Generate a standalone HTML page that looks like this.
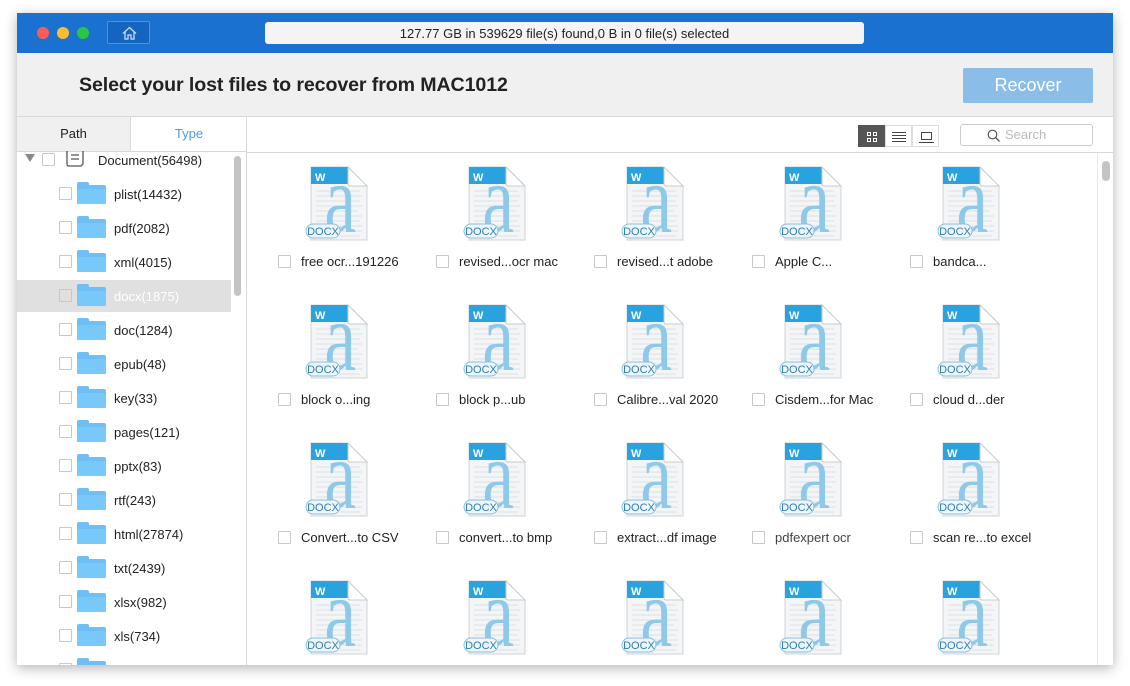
<!DOCTYPE html>
<html><head><meta charset="utf-8"><style>
*{box-sizing:border-box;margin:0;padding:0}
body{width:1130px;height:686px;background:#fff;font-family:"Liberation Sans",sans-serif;position:relative;overflow:hidden}
.win{position:absolute;left:17px;top:13px;width:1096px;height:652px;background:#fff;box-shadow:0 3px 12px rgba(0,0,0,.3);overflow:hidden}
.title{position:absolute;left:0;top:0;width:1096px;height:40px;background:#1a71d0}
.dot{position:absolute;top:14px;width:12px;height:12px;border-radius:50%}
.home{position:absolute;left:90px;top:8px;width:43px;height:23px;border:1px solid #4a92e4;border-radius:2px;background:#1565c0}
.status{position:absolute;left:248px;top:9px;width:599px;height:22px;background:#f4f4f4;border-radius:3px;font-size:13px;text-align:center;line-height:23px;color:#222}
.head{position:absolute;left:0;top:40px;width:1096px;height:64px;background:#f0f0f0;border-bottom:1px solid #d8d8d8}
.head h1{position:absolute;left:62px;top:21px;font-size:19.6px;font-weight:bold;color:#222;letter-spacing:-0.1px}
.rec{position:absolute;left:946px;top:15px;width:130px;height:35px;background:#8bbde9;border-radius:2px;color:#fff;font-size:18px;text-align:center;line-height:35px}
.side{position:absolute;left:0;top:104px;width:230px;height:548px;border-right:1px solid #d8d8d8}
.tab{position:absolute;top:0;height:35px;line-height:33px;font-size:13px;text-align:center;border-bottom:1px solid #d8d8d8}
.row{position:absolute;left:0;width:214px;height:32px;font-size:13px;color:#222}
.cb{position:absolute;width:13px;height:13px;border:1px solid #c8c8c8;background:#fff;border-radius:1px}
.fold{position:absolute;left:60px;top:7px;width:29px;height:19px;background:#6ebff5;border-radius:2px}
.fold:before{content:"";position:absolute;left:0;top:-3px;width:12px;height:5px;background:#6ebff5;border-radius:2px 2px 0 0}
.fold:after{content:"";position:absolute;left:0;top:4px;width:29px;height:15px;background:#79c8fa;border-radius:1px}
.toolbar{position:absolute;left:230px;top:104px;width:866px;height:36px;border-bottom:1px solid #d8d8d8}
.vb{position:absolute;top:8px;width:27px;height:22px;border:1px solid #ddd}
.search{position:absolute;left:713px;top:7px;width:133px;height:22px;border:1px solid #ccc;border-radius:3px;color:#bbb;font-size:13px;line-height:20px;padding-left:44px}
.item{position:absolute}
.lab{position:absolute;font-size:13px;color:#222;white-space:nowrap}
</style></head><body>
<svg width="0" height="0" style="position:absolute"><defs>
<symbol id="ic" viewBox="0 0 76 82">
<path d="M11 2H48L67 21V75H11Z" fill="#f3f5f7" stroke="#cfd3d6"/>
<path d="M11 2H48L52 6V19H11Z" fill="#29a3df"/>
<path d="M48 2L67 21H50Q48 21 48 19Z" fill="#fff" stroke="#c9ccce"/>
<text x="15" y="16" font-size="11" font-weight="bold" fill="#fff" font-family="Liberation Sans">W</text>
<g stroke="#dde1e5" stroke-width="1">
<path d="M16 26H60M16 31H62M16 36H60M16 41H62M16 46H58M16 51H62M16 56H60M16 61H62M40 66H62M40 71H60"/></g>
<text x="31" y="37.2" font-size="55" fill="#8fc9ea" font-family="Liberation Serif" text-anchor="middle" transform="scale(1.3,1.8)">a</text>
<rect x="6" y="59" width="34" height="14" rx="7" fill="#eef6fb" stroke="#8cbfdc"/>
<text x="23" y="70" font-size="11" fill="#2f7fb0" font-family="Liberation Sans" text-anchor="middle">DOCX</text>
</symbol></defs></svg>
<div class="win">
<div class="title">
<div class="dot" style="left:20px;background:#fc5d57"></div>
<div class="dot" style="left:40px;background:#fdbb2e"></div>
<div class="dot" style="left:60px;background:#28c840"></div>
<div class="home"><svg width="43" height="23" viewBox="0 0 43 23"><path d="M15 11.5L21.5 5.5 28 11.5M17 10V17H20V13H23V17H26V10" fill="none" stroke="#cfe3fa" stroke-width="1.2"/></svg></div>
<div class="status">127.77 GB in 539629 file(s) found,0 B in 0 file(s) selected</div>
</div>
<div class="head"><h1>Select your lost files to recover from MAC1012</h1><div class="rec">Recover</div></div>
<div class="side">
<div class="tab" style="left:0;width:114px;background:#f0f0f0;border-right:1px solid #d8d8d8;color:#222">Path</div>
<div class="tab" style="left:114px;width:116px;color:#4a9ae8">Type</div>
<div style="position:absolute;left:217px;top:39px;width:7px;height:140px;background:#c4c4c4;border-radius:4px"></div>
<div class="row" style="top:35px;height:16px">
<div style="position:absolute;left:8px;top:2px;width:0;height:0;border-left:5px solid transparent;border-right:5px solid transparent;border-top:8px solid #888"></div>
<div class="cb" style="left:25px;top:1px"></div>
<svg style="position:absolute;left:48px;top:-2px" width="20" height="18"><path d="M2 1V14Q2 16 4 16H16L18 14V1M6 5H14M6 9H14" fill="none" stroke="#555" stroke-width="1.3"/></svg>
<span style="position:absolute;left:81px;top:1px">Document(56498)</span></div>
</div>
<div class="toolbar">
<div class="vb" style="left:611px;background:#555;border-color:#555"><svg width="27" height="22"><g fill="none" stroke="#fff"><rect x="8.5" y="6.5" width="3" height="3"/><rect x="14.5" y="6.5" width="3" height="3"/><rect x="8.5" y="12.5" width="3" height="3"/><rect x="14.5" y="12.5" width="3" height="3"/></g></svg></div>
<div class="vb" style="left:638px"><svg width="27" height="22"><path d="M6 6.5H20M6 9.5H20M6 12.5H20M6 15.5H20" stroke="#444"/></svg></div>
<div class="vb" style="left:665px"><svg width="27" height="22"><path d="M8.5 6.5H18.5V13.5H8.5ZM6 16.5H21" fill="none" stroke="#444"/></svg></div>
<div class="search"><svg style="position:absolute;left:26px;top:4px" width="14" height="14"><circle cx="5.5" cy="5.5" r="4.3" fill="none" stroke="#555" stroke-width="1.2"/><path d="M8.7 8.7L12.5 12.5" stroke="#555" stroke-width="1.3"/></svg>Search</div>
</div>
<div style="position:absolute;left:1080px;top:140px;width:16px;height:512px;border-left:1px solid #e8e8e8"></div>
<div style="position:absolute;left:1085px;top:148px;width:8px;height:20px;background:#c4c4c4;border-radius:4px"></div>
<div id="side"></div><div id="grid"></div>
</div>
<script>
var s="",names=["plist(14432)","pdf(2082)","xml(4015)","docx(1875)","doc(1284)","epub(48)","key(33)","pages(121)","pptx(83)","rtf(243)","html(27874)","txt(2439)","xlsx(982)","xls(734)",""];
names.forEach(function(n,i){var t=104+60+i*34+1;var sel=i==3;
s+='<div class="row" style="top:'+(t)+'px;'+(sel?'background:#e0e0e0;':'')+'"><div class="cb" style="left:42px;top:9px;'+(sel?'background:#e0e0e0;':'')+'"></div><div class="fold"></div><span style="position:absolute;left:97px;top:9px;'+(sel?'color:#fff':'')+'">'+n+'</span></div>';});
document.getElementById('side').innerHTML=s;
var L=[["free ocr...191226","revised...ocr mac","revised...t adobe","Apple C...","bandca..."],["block o...ing","block p...ub","Calibre...val 2020","Cisdem...for Mac","cloud d...der"],["Convert...to CSV","convert...to bmp","extract...df image","pdfexpert ocr","scan re...to excel"],["","","","",""]];
var g="";for(var r=0;r<4;r++)for(var c=0;c<5;c++){var x=283+c*158,y=152+r*138;
g+='<svg class="item" style="left:'+x+'px;top:'+y+'px" width="76" height="82"><use href="#ic"/></svg>';
if(L[r][c]){var lx=261+c*158,ly=242+r*138;var cl=(r==2&&c==3)?'#444':'#222';
g+='<div class="cb" style="left:'+lx+'px;top:'+ly+'px"></div><div class="lab" style="left:'+(lx+23)+'px;top:'+(ly-1)+'px;color:'+cl+'">'+L[r][c]+'</div>';}}
document.getElementById('grid').innerHTML=g;
</script>
</body></html>
